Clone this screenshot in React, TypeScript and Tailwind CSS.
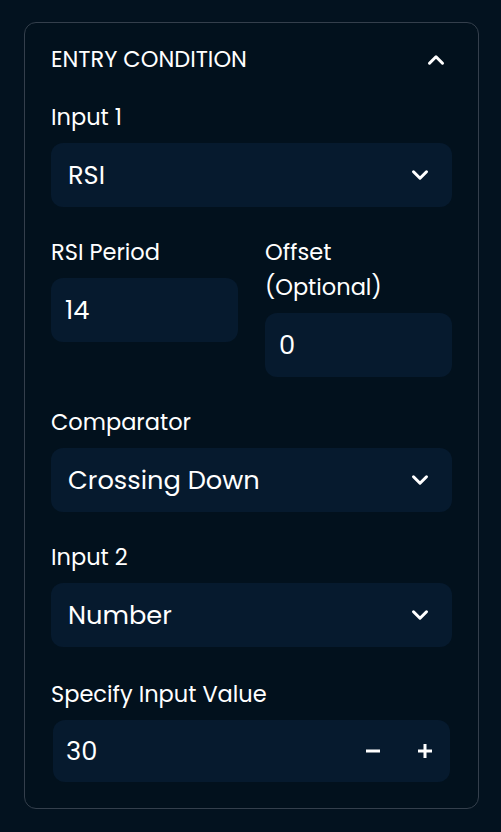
import { ChevronDown, ChevronUp } from "lucide-react";

const font = { fontFamily: '"Poppins", Inter, "Noto Sans", sans-serif' };

function Label({ children }: { children: React.ReactNode }) {
  return <div className="text-[22.5px] leading-[35px] text-white mb-2">{children}</div>;
}

function Select({ value }: { value: string }) {
  return (
    <div className="h-16 rounded-xl bg-[#061a2e] flex items-center justify-between pl-[17px] pr-[19px]">
      <span className="text-[25.7px] text-white">{value}</span>
      <ChevronDown className="w-[26px] h-[26px] text-white" strokeWidth={2.8} />
    </div>
  );
}

function TextBox({ value }: { value: string }) {
  return (
    <div className="h-16 rounded-xl bg-[#061a2e] flex items-center pl-[14px]">
      <span className="text-[25.7px] text-white">{value}</span>
    </div>
  );
}

export default function App() {
  return (
    <div className="min-h-screen bg-[#03121f] pt-[22px] px-6" style={font}>
      <div className="w-[455px] rounded-xl border border-[#343f4c] bg-[#02111d] px-[26px] pt-[20px] pb-[26px]">
        <div className="flex items-center justify-between h-[34px]">
          <span className="text-[22.5px] text-white">ENTRY CONDITION</span>
          <ChevronUp className="w-[26px] h-[26px] text-white mr-[3px]" strokeWidth={2.8} />
        </div>

        <div className="mt-[23px]">
          <Label>Input 1</Label>
          <Select value="RSI" />
        </div>

        <div className="mt-[28px] grid grid-cols-2 gap-[27px] items-start">
          <div>
            <Label>RSI Period</Label>
            <TextBox value="14" />
          </div>
          <div>
            <Label>
              Offset
              <br />
              (Optional)
            </Label>
            <TextBox value="0" />
          </div>
        </div>

        <div className="mt-[28px]">
          <Label>Comparator</Label>
          <Select value="Crossing Down" />
        </div>

        <div className="mt-[28px]">
          <Label>Input 2</Label>
          <Select value="Number" />
        </div>

        <div className="mt-[30px]">
          <Label>Specify Input Value</Label>
          <div className="h-[62px] mx-[2px] rounded-xl bg-[#061a2e] flex items-center pl-[13px] pr-[15px]">
            <span className="text-[25.7px] text-white flex-1">30</span>
            <button className="w-[20px] flex justify-center text-white">
              <svg width="14" height="14" viewBox="0 0 14 14">
                <rect x="0" y="5.5" width="14" height="3" fill="currentColor" />
              </svg>
            </button>
            <button className="ml-[32px] w-[20px] flex justify-center text-white">
              <svg width="14" height="14" viewBox="0 0 14 14">
                <rect x="0" y="5.5" width="14" height="3" fill="currentColor" />
                <rect x="5.5" y="0" width="3" height="14" fill="currentColor" />
              </svg>
            </button>
          </div>
        </div>
      </div>
    </div>
  );
}
